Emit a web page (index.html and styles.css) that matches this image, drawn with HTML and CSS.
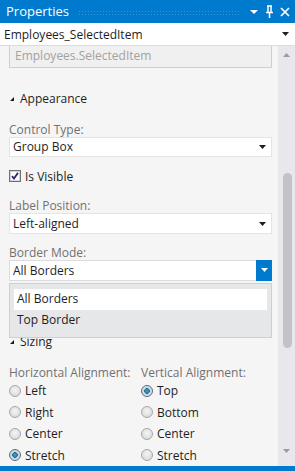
FILE: index.html
```html
<!DOCTYPE html>
<html>
<head>
    <title>Properties</title>
    <link rel="stylesheet" href="styles.css">
</head>
<body>
    <div class="panel">
        <div class="titlebar">
            <span class="title">Properties</span>
            <span class="grip"></span>
            <span class="tb-icons">
                <svg width="9" height="6" viewBox="0 0 9 6"><path d="M0 1h8L4 5z" fill="#fff"/></svg>
                <svg width="9" height="13" viewBox="0 0 9 13"><path d="M2 1h5M3 1v6M6 1v6M1 7.5h7M4.5 8v5" stroke="#fff" stroke-width="1.5" fill="none"/></svg>
                <svg width="10" height="10" viewBox="0 0 10 10"><path d="M1 1l8 8M9 1L1 9" stroke="#fff" stroke-width="1.7"/></svg>
            </span>
        </div>
        <div class="objsel">
            <span>Employees_SelectedItem</span>
            <svg class="tri" width="7" height="4" viewBox="0 0 7 4"><path d="M0 0h7L3.5 4z" fill="#1e1e1e"/></svg>
        </div>
        <div class="main">
            <div class="content">
                <div class="ro-box">Employees.SelectedItem</div>

                <div class="section-head"><span class="expander"></span>Appearance</div>

                <div class="label first">Control Type:</div>
                <div class="select">
                    <span>Group Box</span>
                    <svg class="tri" width="7" height="4" viewBox="0 0 7 4"><path d="M0 0h7L3.5 4z" fill="#1e1e1e"/></svg>
                </div>

                <div class="check">
                    <svg width="12" height="12" viewBox="0 0 12 12">
                        <rect x="0.5" y="0.5" width="11" height="11" fill="#f4f4f4" stroke="#707070"/>
                        <rect x="1.5" y="1.5" width="9" height="9" fill="#fff" stroke="#d4d4d4"/>
                        <path d="M3 6.2l2 2.3L9 2.8" stroke="#23247a" stroke-width="1.8" fill="none"/>
                    </svg>
                    <span>Is Visible</span>
                </div>

                <div class="label">Label Position:</div>
                <div class="select">
                    <span>Left-aligned</span>
                    <svg class="tri" width="7" height="4" viewBox="0 0 7 4"><path d="M0 0h7L3.5 4z" fill="#1e1e1e"/></svg>
                </div>

                <div class="label">Border Mode:</div>
                <div class="combo">
                    <div class="select open">
                        <span>All Borders</span>
                        <span class="drop-btn">
                            <svg width="7" height="4" viewBox="0 0 7 4"><path d="M0 0h7L3.5 4z" fill="#fff"/></svg>
                        </span>
                    </div>
                    <div class="drop-list">
                        <div class="item selected">All Borders</div>
                        <div class="item">Top Border</div>
                    </div>
                </div>

                <div class="section-head sizing"><span class="expander"></span>Sizing</div>

                <div class="align-grid">
                    <div class="align-col">
                        <div class="label">Horizontal Alignment:</div>
                        <div class="radio"><span class="dot"></span>Left</div>
                        <div class="radio"><span class="dot"></span>Right</div>
                        <div class="radio"><span class="dot"></span>Center</div>
                        <div class="radio"><span class="dot on"></span>Stretch</div>
                    </div>
                    <div class="align-col">
                        <div class="label">Vertical Alignment:</div>
                        <div class="radio"><span class="dot on"></span>Top</div>
                        <div class="radio"><span class="dot"></span>Bottom</div>
                        <div class="radio"><span class="dot"></span>Center</div>
                        <div class="radio"><span class="dot"></span>Stretch</div>
                    </div>
                </div>
            </div>
            <div class="scrollbar">
                <div class="arrow">
                    <svg width="7" height="4" viewBox="0 0 7 4"><path d="M0 4h7L3.5 0z" fill="#9a9ba3"/></svg>
                </div>
                <div class="thumb"></div>
                <div class="arrow down">
                    <svg width="7" height="4" viewBox="0 0 7 4"><path d="M0 0h7L3.5 4z" fill="#9a9ba3"/></svg>
                </div>
            </div>
        </div>
        <div class="footer"></div>
    </div>
</body>
</html>
```

FILE: styles.css
```css
body {
    margin: 0;
    font-family: "Open Sans", "Noto Sans", sans-serif;
    font-size: 12px;
    color: #1e1e1e;
    background-color: #f5f5f5;
}
.panel {
    width: 295px;
    height: 471px;
    display: flex;
    flex-direction: column;
    overflow: hidden;
}
.titlebar {
    height: 23px;
    flex-shrink: 0;
    background-color: #007acc;
    display: flex;
    align-items: center;
    padding: 0 5px 0 6px;
}
.title {
    color: #fff;
    font-size: 13px;
    line-height: 23px;
}
.grip {
    flex: 1;
    height: 5px;
    margin: 1px 10px 0 9px;
    background-image: radial-gradient(circle, #3a96d6 0.6px, transparent 0.8px);
    background-size: 3px 3px;
}
.tb-icons {
    display: flex;
    align-items: center;
    gap: 6px;
}
.tb-icons svg {
    display: block;
}
.objsel {
    height: 22px;
    flex-shrink: 0;
    background-color: #fff;
    border-bottom: 1px solid #dcdcdc;
    display: flex;
    align-items: center;
    justify-content: space-between;
    padding: 0 6px 0 4px;
}
.main {
    flex: 1;
    display: flex;
    min-height: 0;
}
.content {
    flex: 1;
    display: flex;
    flex-direction: column;
    padding: 0 6px 0 9px;
    background-color: #f5f5f5;
}
.ro-box {
    height: 21px;
    border: 1px solid #cccedb;
    border-top: none;
    background-color: #f0f0f0;
    color: #a2a2a2;
    padding-left: 5px;
    line-height: 20px;
}
.section-head {
    display: flex;
    align-items: center;
    height: 16px;
    margin-top: 23px;
}
.section-head.sizing {
    margin-top: 53px;
}
.expander {
    width: 0;
    height: 0;
    border-left: 4px solid transparent;
    border-bottom: 4px solid #1e1e1e;
    margin: 1px 6px 0 1px;
}
.label {
    color: #717171;
    line-height: 15px;
    margin-top: 11px;
    white-space: nowrap;
}
.label.first {
    margin-top: 15px;
}
.select {
    height: 19px;
    border: 1px solid #e4e4e4;
    background-color: #fff;
    display: flex;
    align-items: center;
    justify-content: space-between;
    padding-left: 3px;
    padding-right: 5px;
}
.select.open {
    border-color: #dcdcdc;
    padding-right: 0;
}
.drop-btn {
    width: 16px;
    height: 21px;
    margin: -1px -1px -1px 0;
    background-color: #007acc;
    display: flex;
    align-items: center;
    justify-content: center;
}
.combo {
    position: relative;
}
.drop-list {
    position: absolute;
    top: 23px;
    left: 0;
    right: 0;
    height: 44px;
    padding: 5px 4px 4px 4px;
    background-color: #e6e7e8;
    border: 1px solid #cccedb;
    z-index: 2;
}
.item {
    height: 21px;
    line-height: 20px;
    padding-left: 3px;
}
.item.selected {
    background-color: #fff;
}
.check {
    display: flex;
    align-items: center;
    gap: 4px;
    height: 16px;
    margin-top: 11px;
    margin-bottom: 3px;
}
.check svg {
    display: block;
}
.check span {
    color: #1e1e1e;
}
.align-grid {
    display: grid;
    grid-template-columns: 132px 1fr;
}
.align-col .label {
    margin-top: 15px;
}
.radio {
    display: flex;
    align-items: center;
    height: 21.5px;
    color: #1e1e1e;
}
.dot {
    width: 10px;
    height: 10px;
    border-radius: 50%;
    border: 1px solid #a7a7a7;
    background: radial-gradient(circle at 50% 40%, #f4f4f4 0, #d4d4d4 100%);
    margin-right: 4px;
}
.dot.on {
    border-color: #5a6b7c;
    background: radial-gradient(circle, #46a8d0 0, #1e6f9a 2.6px, #c9d3dc 3px, #e8ecf0 100%);
}
.scrollbar {
    width: 17px;
    background-color: #e8e8ec;
    display: flex;
    flex-direction: column;
    align-items: center;
}
.arrow {
    height: 18px;
    display: flex;
    align-items: center;
    justify-content: center;
}
.arrow svg {
    display: block;
}
.thumb {
    width: 9px;
    height: 175px;
    margin-top: 109px;
    margin-left: 1px;
    border-radius: 5px;
    background-color: #c2c3c9;
}
.arrow.down {
    margin-top: auto;
    margin-bottom: 6px;
}
.footer {
    height: 5px;
    flex-shrink: 0;
    background-color: #007acc;
}
```
